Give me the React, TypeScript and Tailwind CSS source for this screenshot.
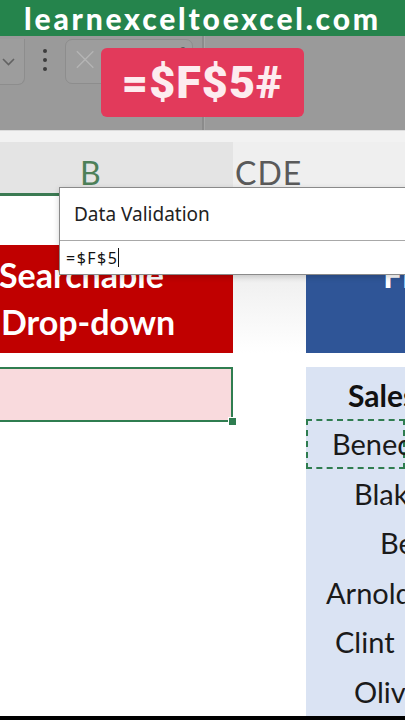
import { ReactNode } from "react";

const NameRow = ({ pad, children, dashed }: { pad: string; children: ReactNode; dashed?: boolean }) => (
    <div
        className={`h-[49.5px] flex items-center whitespace-nowrap text-[29px] text-[#1a1a1a] leading-none ${pad} ${
            dashed ? "border-2 border-dashed border-[#2f7d50]" : ""
        }`}
    >
        {children}
    </div>
);

export default function App() {
    return (
        <div className="relative w-[405px] h-[720px] overflow-hidden bg-white font-['Lato',sans-serif]">
            {/* site banner */}
            <div className="h-[36px] bg-[#25844c] flex items-center justify-center">
                <span className="text-white text-[30px] font-black tracking-[2.8px] leading-none">
                    learnexceltoexcel.com
                </span>
            </div>

            {/* dimmed formula bar */}
            <div className="h-[94px] bg-[#9a9a9a] flex items-start">
                <div className="w-[25px] h-[46px] mt-[3px] rounded-br-[7px] border-r border-b border-[#8d8d8d] bg-[#9d9d9d] flex items-center justify-start pl-[2px]">
                    <svg width="13" height="8" viewBox="0 0 13 8">
                        <polyline points="1,1 6.5,6.5 12,1" fill="none" stroke="#626262" strokeWidth="1.6" />
                    </svg>
                </div>
                <div className="w-[40px] flex flex-col items-center gap-[5px] mt-[13px]">
                    <span className="w-[4px] h-[4px] rounded-full bg-[#3c3c3c]" />
                    <span className="w-[4px] h-[4px] rounded-full bg-[#3c3c3c]" />
                    <span className="w-[4px] h-[4px] rounded-full bg-[#3c3c3c]" />
                </div>
                <div className="w-[128px] h-[45px] mt-[3px] rounded-[7px] border border-[#8d8d8d] bg-[#9d9d9d] flex items-start pt-[9px] pl-[10px] gap-[34px]">
                    <svg width="21" height="21" viewBox="0 0 21 21">
                        <path d="M1 1 L20 20 M20 1 L1 20" stroke="#b4b4b4" strokeWidth="1.6" />
                    </svg>
                    <svg width="16" height="14" viewBox="0 0 16 14">
                        <polyline points="1,7 6,12 15,1" fill="none" stroke="#7a7a7a" strokeWidth="1.6" />
                    </svg>
                    <span className="-mt-[5px] font-['Liberation_Serif',serif] italic text-[22px] text-[#5e5e5e] leading-none">
                        fx
                    </span>
                </div>
                <div className="ml-[9px] self-stretch w-[2px] bg-[#8b8b8b]" />
                <div className="flex-1 self-stretch border-l border-[#a6a6a6]" />
            </div>

            {/* ribbon gap */}
            <div className="h-[12px] bg-[#f2f2f2] border-t border-[#dcdcdc]" />

            {/* column headers */}
            <div className="h-[54px] flex">
                <div className="w-[233px] bg-[#e4e4e4] border-b-[3px] border-[#3b7a52] flex items-center pl-[80px] pt-[10px]">
                    <span className="text-[32px] text-[#4d8059] leading-none">B</span>
                </div>
                <div className="flex-1 bg-[#efefef] border-b-2 border-[#9d9d9d] flex items-center pl-[2px] pt-[10px]">
                    <span className="text-[32px] text-[#5a5a5a] leading-none tracking-[1px]">CDE</span>
                </div>
            </div>

            {/* sheet body */}
            <div className="h-[49px]" />
            <div className="h-[108px] flex">
                <div className="w-[233px] bg-[#c00000] overflow-hidden whitespace-nowrap pt-[6px] text-white font-bold text-[34px] leading-[47px]">
                    <div className="-ml-[1px]">Searchable</div>
                    <div className="ml-[1px]">Drop-down</div>
                </div>
                <div className="w-[73px] bg-gradient-to-b from-[#e9e9e9] to-white" />
                <div className="flex-1 bg-[#2f5597] overflow-hidden whitespace-nowrap pt-[6px] pl-[77px] text-white font-bold text-[34px] leading-[47px]">
                    Filtered
                </div>
            </div>
            <div className="h-[14px]" />
            <div className="flex">
                <div className="w-[233px]">
                    <div className="relative h-[55px] bg-[#f9dadd] border-y-2 border-r-2 border-[#2f7d50]">
                        <span className="absolute -right-[6px] -bottom-[6px] w-[9px] h-[9px] bg-[#2f7d50] border border-white" />
                    </div>
                </div>
                <div className="w-[73px]" />
                <div className="flex-1 bg-[#dae3f3] overflow-hidden">
                    <div className="h-[52px] flex items-center pl-[42px] pt-[4px] whitespace-nowrap font-bold text-[30px] text-[#111] leading-none">
                        Sales Rep
                    </div>
                    <NameRow pad="pl-[24px]" dashed>
                        Benedict
                    </NameRow>
                    <NameRow pad="pl-[48px]">Blake</NameRow>
                    <NameRow pad="pl-[74px]">Ben</NameRow>
                    <NameRow pad="pl-[20px]">Arnold</NameRow>
                    <NameRow pad="pl-[29px]">Clint</NameRow>
                    <NameRow pad="pl-[48px]">Olivia</NameRow>
                </div>
            </div>
            <div className="h-[4px] bg-black" />

            {/* formula badge */}
            <div className="absolute left-[101px] top-[48px] w-[203px] h-[69px] rounded-[6px] bg-[#e23a5b] flex items-center justify-center">
                <span className="font-['Roboto',sans-serif] font-black text-[45px] tracking-[1px] text-[#fdecef] leading-none">
                    =$F$5#
                </span>
            </div>

            {/* data validation popup */}
            <div className="absolute left-[59px] top-[187px] w-[360px] h-[88px] bg-white border border-[#8a8a8a] shadow-[0_2px_6px_rgba(0,0,0,0.18)] flex flex-col font-['Noto_Sans',sans-serif]">
                <div className="h-[53px] flex items-center pl-[14px] border-b border-[#a8a8a8] text-[19px] text-[#222]">
                    Data Validation
                </div>
                <div className="flex-1 flex items-center pl-[6px] text-[16px] tracking-[1.5px] text-[#111]">
                    <span>=$F$5</span>
                    <span className="w-[1px] h-[19px] bg-[#111]" />
                </div>
            </div>
        </div>
    );
}
